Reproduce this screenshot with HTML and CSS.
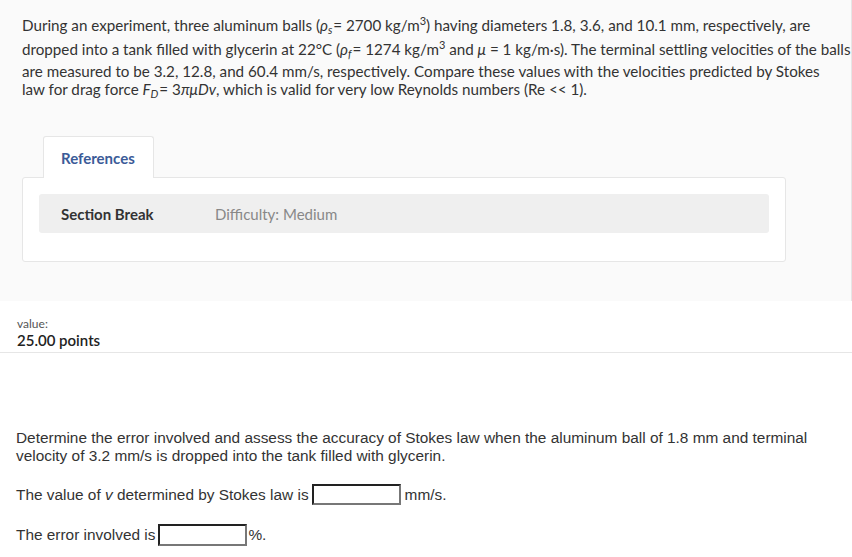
FILE: index.html
```html
<!DOCTYPE html>
<html>
<head>
<meta charset="utf-8">
<link rel="stylesheet" href="styles.css">
</head>
<body>
<section class="top">
  <div class="question">
    <div class="ql l1">During an experiment, three aluminum balls (<i>ρ</i><sub><i>s</i></sub>&#8202;= 2700 kg/m<sup>3</sup>) having diameters 1.8, 3.6, and 10.1 mm, respectively, are</div>
    <div class="ql l2">dropped into a tank filled with glycerin at 22°C (<i>ρ</i><sub><i>f</i></sub>&#8202;= 1274 kg/m<sup>3</sup> and <i>μ</i> = 1 kg/m·s). The terminal settling velocities of the balls</div>
    <div class="ql l3">are measured to be 3.2, 12.8, and 60.4 mm/s, respectively. Compare these values with the velocities predicted by Stokes</div>
    <div class="ql l4">law for drag force <i>F</i><sub><i>D</i></sub>&#8202;= 3<i>πμDv</i>, which is valid for very low Reynolds numbers (Re &lt;&lt; 1).</div>
  </div>
  <div class="refs">
    <div class="tab">References</div>
    <div class="card">
      <div class="row">
        <span class="sec">Section Break</span>
        <span class="diff">Difficulty: Medium</span>
      </div>
    </div>
  </div>
</section>
<section class="value">
  <div class="vlabel">value:</div>
  <div class="vpoints">25.00 points</div>
</section>
<section class="part">
  <p class="prompt">Determine the error involved and assess the accuracy of Stokes law when the aluminum ball of 1.8 mm and terminal<br>velocity of 3.2 mm/s is dropped into the tank filled with glycerin.</p>
  <div class="ans a1"><span>The value of <i>v</i> determined by Stokes law is</span><input class="box" type="text"><span class="unit">mm/s.</span></div>
  <div class="ans a2"><span>The error involved is</span><input class="box" type="text"><span class="pct">%.</span></div>
</section>
</body>
</html>
```

FILE: styles.css
```css
* { box-sizing: border-box; }
html, body { margin: 0; padding: 0; background: #fff; }
body { width: 852px; height: 557px; overflow: hidden; font-family: "Lato", "Liberation Sans", sans-serif; color: #333; }

.top {
  background: #fafafa;
  height: 301px;
  border-right: 1px solid #e6e6e6;
  padding-top: 16px;
}
.question { padding-left: 22px; font-size: 15.2px; color: #333; }
.ql { white-space: nowrap; line-height: 18px; }
.l1 { height: 24px; }
.l2 { height: 22px; }
.l3 { height: 18px; }
.l4 { height: 18px; }
sub, sup { line-height: 0; font-size: 11px; }
sub { vertical-align: -3px; }
sup { vertical-align: 6px; }

.refs { margin: 38px 0 0 22px; width: 764px; }
.tab {
  margin-left: 21px;
  width: 111px;
  height: 42px;
  background: #fff;
  border: 1px solid #e6e6e6;
  border-bottom: none;
  border-radius: 3px 3px 0 0;
  color: #3b5b98;
  font-weight: 700;
  font-size: 15px;
  padding-left: 17px;
  line-height: 42px;
  position: relative;
  z-index: 1;
  margin-bottom: -1px;
}
.card {
  background: #fff;
  border: 1px solid #e6e6e6;
  border-radius: 3px;
  padding: 16px 16px 28px 16px;
}
.row {
  background: #efefef;
  border-radius: 3px;
  height: 39px;
  display: flex;
  align-items: center;
  padding-left: 22px;
  font-size: 15px;
}
.sec { width: 154px; font-weight: 700; color: #333; }
.diff { color: #888; }

.value { padding: 16px 0 3px 17px; border-bottom: 1px solid #e6e6e6; }
.vlabel { font-size: 12px; line-height: 14px; color: #555; }
.vpoints { font-size: 15px; line-height: 18px; color: #222; font-weight: 600; }

.part { padding-left: 16px; font-family: "Liberation Sans", Arial, sans-serif; font-size: 15.4px; color: #333; }
.prompt { margin: 76px 0 0 0; line-height: 18px; }
.ans { display: flex; align-items: center; height: 21px; white-space: pre; }
.a1 { margin-top: 19px; }
.a2 { margin-top: 19px; height: 22px; }
.box {
  width: 89px;
  height: 21px;
  margin: 0 4px 0 3px;
  padding: 0;
  background: #fff;
  border-style: solid;
  border-width: 2px;
  border-color: #222 #777 #777 #222;
  border-radius: 0;
  font: inherit;
}
.a2 .box { height: 22px; margin-right: 1px; }
```
